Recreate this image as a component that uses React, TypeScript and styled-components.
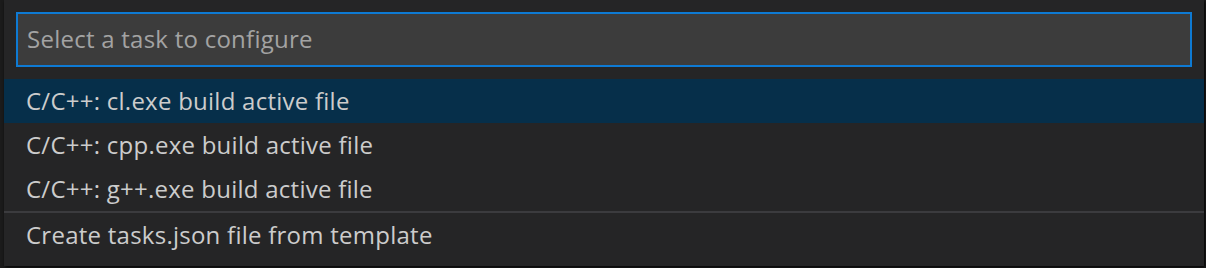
import React from "react";
import styled, { createGlobalStyle } from "styled-components";

const GlobalStyle = createGlobalStyle`
  html, body {
    margin: 0;
    padding: 0;
    background: #1e1e1e;
    overflow: hidden;
  }
  * {
    box-sizing: border-box;
  }
`;

const Stage = styled.div`
  display: flex;
  width: 1206px;
  height: 268px;
  background: #1e1e1e;
`;

const Gutter = styled.div`
  width: 4px;
  flex: none;
  background: #1b1b1b;
`;

const QuickInput = styled.div`
  width: 1200px;
  height: 266px;
  flex: none;
  display: flex;
  flex-direction: column;
  background: #252526;
  box-shadow: 1px 1px 3px #000;
  font-family: "Open Sans", "Noto Sans", sans-serif;
  letter-spacing: 0.25px;
`;

const Header = styled.div`
  padding: 12px;
`;

const Input = styled.input`
  display: block;
  width: 1176px;
  height: 55px;
  margin: 0;
  padding: 0 0 2px 9px;
  background: #3c3c3c;
  border: 2px solid #0e7ad3;
  outline: none;
  color: #cccccc;
  font-family: inherit;
  font-size: 24px;
  letter-spacing: inherit;

  &::placeholder {
    color: #a3a3a3;
  }
`;

const List = styled.div`
  display: flex;
  flex-direction: column;
`;

const Row = styled.div<{ $active?: boolean; $separator?: boolean }>`
  height: ${(p) => (p.$separator ? 46 : 44)}px;
  display: flex;
  align-items: center;
  padding-left: 22px;
  padding-bottom: 1px;
  background: ${(p) => (p.$active ? "#062f4a" : "transparent")};
  border-top: ${(p) => (p.$separator ? "2px solid #3b3b3e" : "none")};
  color: #cccccc;
  font-size: 24px;
  white-space: nowrap;
`;

const items = [
  { label: "C/C++: cl.exe build active file", active: true },
  { label: "C/C++: cpp.exe build active file" },
  { label: "C/C++: g++.exe build active file" },
  { label: "Create tasks.json file from template", separator: true },
];

export default function App() {
  return (
    <>
      <GlobalStyle />
      <Stage>
        <Gutter />
        <QuickInput>
          <Header>
            <Input placeholder="Select a task to configure" readOnly />
          </Header>
          <List>
            {items.map((item) => (
              <Row
                key={item.label}
                $active={item.active}
                $separator={item.separator}
              >
                {item.label}
              </Row>
            ))}
          </List>
        </QuickInput>
      </Stage>
    </>
  );
}
